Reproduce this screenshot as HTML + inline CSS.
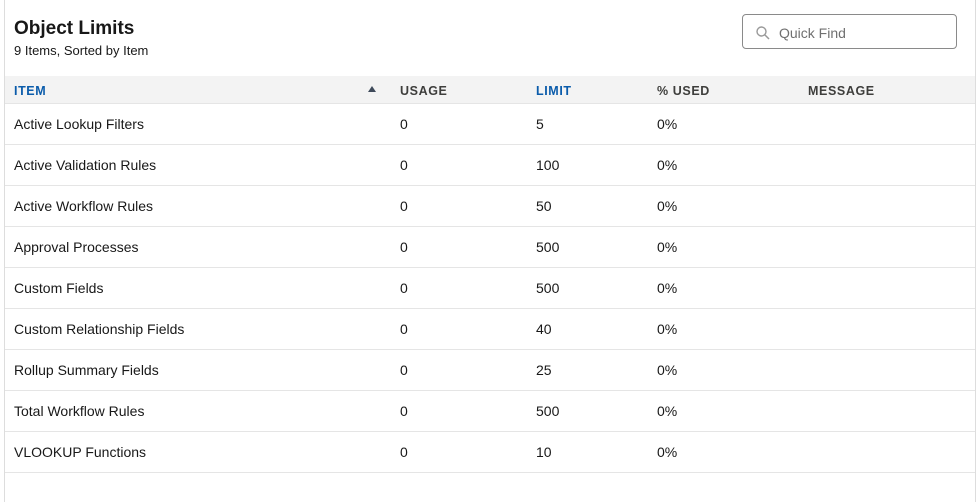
<!DOCTYPE html><html><head><style>
body{margin:0;width:977px;height:502px;background:#fff;font-family:"Liberation Sans",sans-serif;position:relative;overflow:hidden;color:#181818}
.lb{position:absolute;left:4px;top:0;width:1px;height:502px;background:#ddd}
.rb{position:absolute;left:975px;top:0;width:1px;height:502px;background:#ddd}
h1{position:absolute;left:14px;top:18px;margin:0;font-size:19px;font-weight:bold}
.sub{position:absolute;left:14px;top:43px;font-size:13px}
.qf{position:absolute;left:742px;top:14px;width:215px;height:35px;border:1px solid #8a8a8a;border-radius:4px;box-sizing:border-box}
.qf span{position:absolute;left:36px;top:10px;font-size:14px;color:#707070}
.qf svg{position:absolute;left:13px;top:11px}
.hd{position:absolute;left:5px;top:76px;width:970px;height:27px;background:#f3f3f3;border-bottom:1px solid #e5e5e5}
.c{position:absolute;font-size:13px}
.h{font-weight:bold;font-size:12.5px;letter-spacing:.6px;top:8px;color:#3e3e3c}
.blue{color:#0b5cab}
.row{position:absolute;left:5px;width:970px;height:40px;border-bottom:1px solid #e5e5e5}
.row .c{top:12px;font-size:14px}
</style></head><body>
<div class="lb"></div><div class="rb"></div>
<h1>Object Limits</h1>
<div class="sub">9 Items, Sorted by Item</div>
<div class="qf"><svg width="14" height="14" viewBox="0 0 14 14"><circle cx="5.5" cy="5.5" r="4.5" fill="none" stroke="#999" stroke-width="1.4"/><path d="M9 9l4 4" stroke="#999" stroke-width="1.5"/></svg><span>Quick Find</span></div>
<div class="hd">
<div class="c h blue" style="left:9px">ITEM</div>
<div style="position:absolute;left:363px;top:10px;width:0;height:0;border-left:4px solid transparent;border-right:4px solid transparent;border-bottom:6px solid #3e4a5a"></div>
<div class="c h" style="left:395px">USAGE</div>
<div class="c h blue" style="left:531px">LIMIT</div>
<div class="c h" style="left:652px">% USED</div>
<div class="c h" style="left:803px">MESSAGE</div>
</div>
<div class="row" style="top:104px"><div class="c" style="left:9px">Active Lookup Filters</div><div class="c" style="left:395px">0</div><div class="c" style="left:531px">5</div><div class="c" style="left:652px">0%</div></div>
<div class="row" style="top:145px"><div class="c" style="left:9px">Active Validation Rules</div><div class="c" style="left:395px">0</div><div class="c" style="left:531px">100</div><div class="c" style="left:652px">0%</div></div>
<div class="row" style="top:186px"><div class="c" style="left:9px">Active Workflow Rules</div><div class="c" style="left:395px">0</div><div class="c" style="left:531px">50</div><div class="c" style="left:652px">0%</div></div>
<div class="row" style="top:227px"><div class="c" style="left:9px">Approval Processes</div><div class="c" style="left:395px">0</div><div class="c" style="left:531px">500</div><div class="c" style="left:652px">0%</div></div>
<div class="row" style="top:268px"><div class="c" style="left:9px">Custom Fields</div><div class="c" style="left:395px">0</div><div class="c" style="left:531px">500</div><div class="c" style="left:652px">0%</div></div>
<div class="row" style="top:309px"><div class="c" style="left:9px">Custom Relationship Fields</div><div class="c" style="left:395px">0</div><div class="c" style="left:531px">40</div><div class="c" style="left:652px">0%</div></div>
<div class="row" style="top:350px"><div class="c" style="left:9px">Rollup Summary Fields</div><div class="c" style="left:395px">0</div><div class="c" style="left:531px">25</div><div class="c" style="left:652px">0%</div></div>
<div class="row" style="top:391px"><div class="c" style="left:9px">Total Workflow Rules</div><div class="c" style="left:395px">0</div><div class="c" style="left:531px">500</div><div class="c" style="left:652px">0%</div></div>
<div class="row" style="top:432px"><div class="c" style="left:9px">VLOOKUP Functions</div><div class="c" style="left:395px">0</div><div class="c" style="left:531px">10</div><div class="c" style="left:652px">0%</div></div>
</body></html>
